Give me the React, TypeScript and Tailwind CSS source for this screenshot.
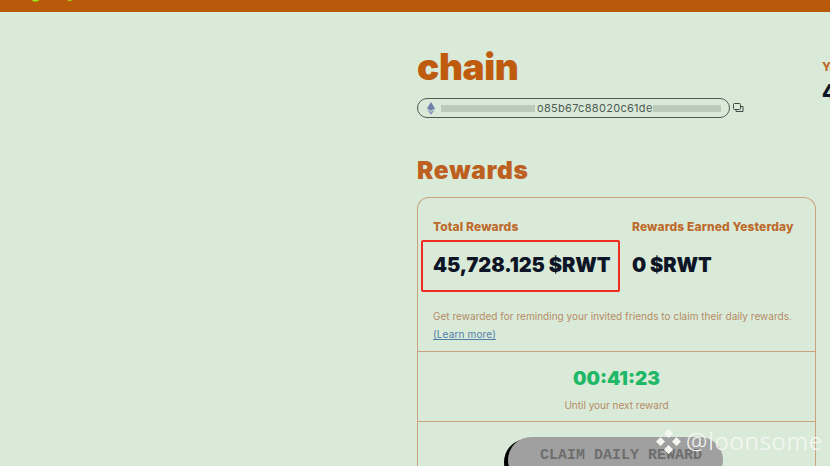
const wide = { fontFamily: 'Inter, sans-serif' };

function EthIcon() {
  return (
    <svg width="8" height="13" viewBox="0 0 8 13" className="shrink-0">
      <path d="M4 0 L8 6.5 L4 8.8 L0 6.5 Z" fill="#6f7fa8" />
      <path d="M4 9.8 L8 7.6 L4 13 L0 7.6 Z" fill="#8d9ac0" />
    </svg>
  );
}

function CopyIcon() {
  return (
    <svg width="11" height="10" viewBox="0 0 11 10" fill="none" stroke="#3d4a44" strokeWidth="1" className="shrink-0">
      <rect x="0.5" y="0.5" width="7" height="6" rx="1" />
      <path d="M8 3.5 H10 V8.5 H3 V7" />
    </svg>
  );
}

export default function App() {
  return (
    <div className="relative h-[466px] w-[830px] overflow-hidden bg-[#daead8]" style={wide}>
      <div className="flex h-3 items-end overflow-hidden bg-[#b85a0a] pl-[11px]">
        <span className="mb-[11px] text-[16px] leading-[18px] font-bold whitespace-nowrap text-[#9be01a]">Registry</span>
      </div>

      <div className="flex pl-[417px]">
        <main className="w-[399px] shrink-0">
          <h1 className="mt-[32px] text-[37px] leading-[46px] font-black tracking-[-0.4px] text-[#bf5b0e]">chain</h1>

          <div className="mt-[8px] flex items-center gap-[3px]">
            <div className="flex h-5 w-[313px] items-center overflow-hidden rounded-full border border-[#4a5a55] pl-[9px]">
              <EthIcon />
              <span className="ml-[6px] h-[7px] w-[94px] bg-[#bccabb]" />
              <span className="ml-[2px] text-[11px] tracking-[0.3px] whitespace-nowrap text-[#4d5a55]">o85b67c88020c61de</span>
              <span className="h-[7px] w-[68px] bg-[#bccabb]" />
            </div>
            <CopyIcon />
          </div>

          <h2 className="mt-[38px] text-[24.5px] leading-[28px] font-black tracking-[0.7px] text-[#bd5f20]">Rewards</h2>

          <section className="mt-[13px] rounded-t-xl border border-b-0 border-[#c9a27e]">
            <div className="border-b border-[#c9a27e] px-[15px] pt-[22px] pb-[10px]">
              <div className="grid grid-cols-[199px_1fr]">
                <div>
                  <p className="text-[12px] leading-[14px] font-extrabold tracking-[0.12px] whitespace-nowrap text-[#bd6a2c]">Total Rewards</p>
                  <div className="relative mt-[8px] flex h-[46px] items-center">
                    <span className="absolute top-[-2px] left-[-12px] h-[52px] w-[199px] rounded-[2px] border-[2.5px] border-[#ef2b22]" />
                    <span className="text-[20px] font-black tracking-[-0.08px] whitespace-nowrap text-[#0d1526]">45,728.125 $RWT</span>
                  </div>
                </div>
                <div>
                  <p className="text-[12px] leading-[14px] font-extrabold tracking-[0.12px] whitespace-nowrap text-[#bd6a2c]">Rewards Earned Yesterday</p>
                  <div className="mt-[8px] flex h-[46px] items-center">
                    <span className="text-[20px] font-black tracking-[-0.08px] whitespace-nowrap text-[#0d1526]">0 $RWT</span>
                  </div>
                </div>
              </div>
              <p className="mt-[21px] text-[10px] leading-[14px] tracking-[0.03px] whitespace-nowrap text-[#b58a66]">
                Get rewarded for reminding your invited friends to claim their daily rewards.
              </p>
              <a className="mt-[4px] block text-[10px] leading-[14px] tracking-[0.15px] text-[#4f80a8] underline">(Learn more)</a>
            </div>

            <div className="flex h-[70px] flex-col items-center border-b border-[#c9a27e] pt-[15px]">
              <p className="text-[19px] leading-[24px] font-black text-[#1fb866]">00:41:23</p>
              <p className="mt-[7px] text-[10px] leading-[14px] text-[#b58a66]">Until your next reward</p>
            </div>

            <div className="flex justify-center pt-[15px] pr-[3px]">
              <button className="h-[46px] w-[215px] rounded-[23px] bg-[#a0a0a0] pb-[8px] pl-[12px] font-['Liberation_Mono',monospace] text-[15px] font-bold whitespace-nowrap text-[#6e6e6e] shadow-[-4px_2px_0_#000]">
                CLAIM DAILY REWARD
              </button>
            </div>
          </section>
        </main>

        <aside className="ml-[6px] shrink-0 pt-[48px]">
          <p className="text-[12px] leading-[14px] font-extrabold text-[#bd6a2c]">Your</p>
          <p className="mt-[6px] text-[20px] leading-[24px] font-black text-[#0d1526]">45,728</p>
        </aside>
      </div>

      <div className="absolute top-[426px] left-[655px] flex items-center gap-[4px] text-[#f6f8f4]">
        <svg width="27" height="27" viewBox="0 0 27 27" fill="#f4f6f2">
          <path d="M13.5 1 L18 5.5 L13.5 10 L9 5.5 Z M5.5 9 L10 13.5 L5.5 18 L1 13.5 Z M21.5 9 L26 13.5 L21.5 18 L17 13.5 Z M13.5 17 L18 21.5 L13.5 26 L9 21.5 Z" />
        </svg>
        <span className="font-['Noto_Sans',sans-serif] text-[24px] leading-[30px] font-light tracking-[0.8px]">@loonsome</span>
      </div>
    </div>
  );
}
